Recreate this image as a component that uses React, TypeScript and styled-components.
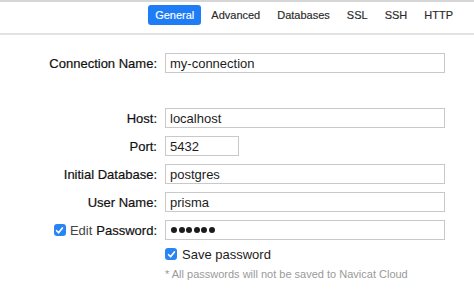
import React from "react";
import styled, { createGlobalStyle } from "styled-components";

const GlobalStyle = createGlobalStyle`
  html, body {
    margin: 0;
    padding: 0;
    background: #fff;
    font-family: "Liberation Sans", Arial, sans-serif;
  }
`;

const Window = styled.div`
  width: 474px;
  height: 295px;
  border-top: 2px solid #d6d6d6;
  box-sizing: border-box;
  background: #fff;
`;

const TabBar = styled.div`
  height: 28px;
  border-bottom: 2px solid #e2e2e2;
  display: flex;
  justify-content: flex-end;
  align-items: flex-start;
  padding: 3px 14px 0 0;
  box-sizing: content-box;
  gap: 3px;
`;

const Tab = styled.div<{ $active?: boolean }>`
  height: 20px;
  line-height: 20px;
  padding: 0 7px;
  border-radius: 3px;
  font-size: 11px;
  color: ${(p) => (p.$active ? "#fff" : "#2a2a2a")};
  background: ${(p) => (p.$active ? "#1e7cf6" : "transparent")};
  -webkit-text-stroke: 0.15px ${(p) => (p.$active ? "#fff" : "#2a2a2a")};
`;

const Form = styled.div`
  display: grid;
  grid-template-columns: 157px 1fr;
  column-gap: 8px;
  row-gap: 8px;
  padding-top: 18px;
  align-items: center;
`;

const Label = styled.div`
  display: flex;
  justify-content: flex-end;
  align-items: center;
  font-size: 13px;
  color: #111;
  height: 20px;
  -webkit-text-stroke: 0.2px #111;
`;

const Spacer = styled.div`
  grid-column: 1 / span 2;
  height: 19px;
`;

const Field = styled.input<{ $width?: number }>`
  width: ${(p) => p.$width ?? 280}px;
  height: 20px;
  box-sizing: border-box;
  border: 1px solid #c9c9c9;
  border-radius: 0;
  padding: 0 4px;
  margin: 0;
  font-family: "Liberation Sans", Arial, sans-serif;
  font-size: 13px;
  color: #1c1c1c;
  outline: none;
  background: #fff;
`;

const Dots = styled.div`
  width: 280px;
  height: 20px;
  box-sizing: border-box;
  border: 1px solid #c9c9c9;
  padding: 0 5px;
  display: flex;
  align-items: center;
  gap: 1.5px;
`;

const Dot = styled.span`
  width: 6px;
  height: 6px;
  border-radius: 50%;
  background: #1c1c1c;
`;

const Box = styled.span`
  width: 12px;
  height: 12px;
  border-radius: 3px;
  background: #2b84f4;
  display: inline-flex;
  align-items: center;
  justify-content: center;
  flex: none;
`;

const EditText = styled.span`
  color: #444;
  -webkit-text-stroke: 0;
  margin: 0 4px 0 4px;
`;

const CheckRow = styled.div`
  grid-column: 2;
  display: flex;
  align-items: center;
  gap: 5px;
  font-size: 13px;
  color: #1c1c1c;
  height: 14px;
  margin-top: -1px;
`;

const Note = styled.div`
  grid-column: 2;
  font-size: 11px;
  color: #9a9a9a;
  margin-top: -1px;
`;

const Check = () => (
  <Box>
    <svg width="9" height="9" viewBox="0 0 9 9">
      <path
        d="M1.6 4.7 L3.6 6.8 L7.4 1.9"
        fill="none"
        stroke="#fff"
        strokeWidth="1.6"
        strokeLinecap="round"
        strokeLinejoin="round"
      />
    </svg>
  </Box>
);

const tabs = ["General", "Advanced", "Databases", "SSL", "SSH", "HTTP"];

export default function App() {
  return (
    <Window>
      <GlobalStyle />
      <TabBar>
        {tabs.map((t, i) => (
          <Tab key={t} $active={i === 0}>
            {t}
          </Tab>
        ))}
      </TabBar>
      <Form>
        <Label>Connection Name:</Label>
        <Field readOnly value="my-connection" />
        <Spacer />
        <Label>Host:</Label>
        <Field readOnly value="localhost" />
        <Label>Port:</Label>
        <Field readOnly value="5432" $width={74} />
        <Label>Initial Database:</Label>
        <Field readOnly value="postgres" />
        <Label>User Name:</Label>
        <Field readOnly value="prisma" />
        <Label>
          <Check />
          <EditText>Edit</EditText>
          Password:
        </Label>
        <Dots>
          {[0, 1, 2, 3, 4, 5].map((i) => (
            <Dot key={i} />
          ))}
        </Dots>
        <CheckRow>
          <Check />
          Save password
        </CheckRow>
        <Note>* All passwords will not be saved to Navicat Cloud</Note>
      </Form>
    </Window>
  );
}
